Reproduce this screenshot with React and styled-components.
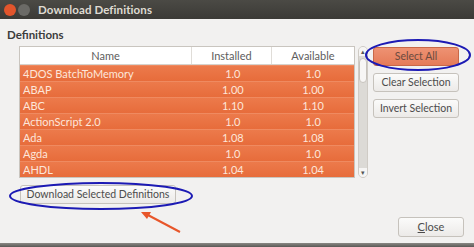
import React from "react";
import styled, { createGlobalStyle } from "styled-components";

const GlobalStyle = createGlobalStyle`
  html, body { margin: 0; padding: 0; background: #f2f1f0; }
  body { font-family: Lato, "Liberation Sans", sans-serif; }
`;

const rows = [
  ["4DOS BatchToMemory", "1.0", "1.0"],
  ["ABAP", "1.00", "1.00"],
  ["ABC", "1.10", "1.10"],
  ["ActionScript 2.0", "1.0", "1.0"],
  ["Ada", "1.08", "1.08"],
  ["Agda", "1.0", "1.0"],
  ["AHDL", "1.04", "1.04"],
];

const App = () => {
  return (
    <Window>
      <GlobalStyle />
      <TitleBar>
        <Dot color="#e2552c" />
        <Dot color="#6b6a66" />
        <Title>Download Definitions</Title>
      </TitleBar>

      <Body>
        <Label>Definitions</Label>
        <Main>
          <Table>
            <HeadRow>
              <HeadCell w={173}>Name</HeadCell>
              <HeadCell w={80}>Installed</HeadCell>
              <HeadCell w={83} last>Available</HeadCell>
            </HeadRow>
            {rows.map((r, i) => (
              <Row key={i}>
                <Cell w={173} left>{r[0]}</Cell>
                <Cell w={80}>{r[1]}</Cell>
                <Cell w={83}>{r[2]}</Cell>
              </Row>
            ))}
          </Table>

          <Scrollbar>
            <Arrow>▴</Arrow>
            <Thumb />
            <Trough />
            <Arrow>▾</Arrow>
          </Scrollbar>

          <Side>
            <Button active>Select All</Button>
            <Button>Clear Selection</Button>
            <Button>Invert Selection</Button>
          </Side>
        </Main>

        <DownloadButton>Download Selected Definitions</DownloadButton>

        <Footer>
          <CloseButton><u>C</u>lose</CloseButton>
        </Footer>
      </Body>
      <BottomEdge />

      {/* hand drawn marks over the screenshot */}
      <Marks width="474" height="247" viewBox="0 0 474 247">
        <ellipse cx="418" cy="55" rx="52" ry="15" fill="none" stroke="#1c1ab4" strokeWidth="2" />
        <ellipse cx="101" cy="196" rx="91" ry="13" fill="none" stroke="#1c1ab4" strokeWidth="2" />
        <line x1="180" y1="232" x2="146" y2="214" stroke="#e8562a" strokeWidth="2" />
        <polygon points="141,212 151,212 147,219" fill="#e8562a" />
      </Marks>
    </Window>
  );
};

const Window = styled.div`
  position: relative;
  width: 474px;
  height: 247px;
  display: flex;
  flex-direction: column;
  overflow: hidden;
  background: #f2f1f0;
`;

const TitleBar = styled.div`
  height: 19px;
  display: flex;
  align-items: center;
  padding-left: 4px;
  gap: 1px;
  background: linear-gradient(#4b4a45, #3b3a36);
`;

const Dot = styled.span`
  width: 12px;
  height: 12px;
  border-radius: 50%;
  background: ${props => props.color};
  margin-right: 1px;
`;

const Title = styled.span`
  margin-left: 6px;
  color: #dfdbd2;
  font-weight: bold;
  font-size: 11.5px;
  letter-spacing: 0.1px;
`;

const Body = styled.div`
  flex: 1;
  display: flex;
  flex-direction: column;
  padding: 8px 10px 0 7px;
`;

const Label = styled.div`
  font-weight: bold;
  font-size: 11.5px;
  color: #3c3c3c;
  height: 15px;
  line-height: 15px;
`;

const Main = styled.div`
  display: flex;
  align-items: flex-start;
  margin-top: 4px;
  padding-left: 12px;
`;

const Table = styled.div`
  width: 336px;
  border: 1px solid #c9c5bf;
  background: #fff;
  box-sizing: border-box;
`;

const HeadRow = styled.div`
  display: flex;
  height: 17px;
  border-bottom: 1px solid #d6d2cc;
`;

const HeadCell = styled.div`
  width: ${props => props.w}px;
  text-align: center;
  font-size: 11px;
  line-height: 17px;
  color: #5d5d5d;
  border-right: ${props => props.last ? "none" : "1px solid #e0ddd8"};
`;

const Row = styled.div`
  display: flex;
  height: 16px;
  background: linear-gradient(#ec7a4b, #e76c3b);
  border-top: 1px solid #ef8a60;
  box-sizing: border-box;
`;

const Cell = styled.div`
  width: ${props => props.w}px;
  font-size: 11px;
  line-height: 15px;
  color: #fde6da;
  text-align: ${props => props.left ? "left" : "center"};
  padding-left: ${props => props.left ? "3px" : "0"};
`;

const Scrollbar = styled.div`
  width: 10px;
  height: 132px;
  margin-left: 3px;
  border: 1px solid #cfcbc5;
  border-radius: 5px;
  background: #dcdad6;
  box-sizing: border-box;
  display: flex;
  flex-direction: column;
  overflow: hidden;
`;

const Arrow = styled.div`
  height: 9px;
  background: #f6f5f4;
  font-size: 7px;
  line-height: 9px;
  text-align: center;
  color: #555;
`;

const Thumb = styled.div`
  height: 25px;
  margin-top: 2px;
  background: #f7f6f5;
  border: 1px solid #c6c2bc;
  border-radius: 4px;
  box-sizing: border-box;
`;

const Trough = styled.div`
  flex: 1;
`;

const Side = styled.div`
  display: flex;
  flex-direction: column;
  gap: 7px;
  margin-left: 5px;
  margin-top: 1px;
`;

const Button = styled.div`
  width: 86px;
  height: 19px;
  box-sizing: border-box;
  border: 1px solid ${props => props.active ? "#c86848" : "#c6c2bc"};
  border-radius: 3px;
  background: ${props => props.active ? "linear-gradient(#ee9273, #e57b58)" : "linear-gradient(#fbfbfa, #eceae8)"};
  font-size: 10.5px;
  line-height: 17px;
  text-align: center;
  white-space: nowrap;
  color: ${props => props.active ? "#6a4a40" : "#4c4c4c"};
`;

const DownloadButton = styled(Button)`
  width: 156px;
  margin: 7px 0 0 13px;
`;

const Footer = styled.div`
  display: flex;
  justify-content: flex-end;
  margin-top: 13px;
`;

const CloseButton = styled(Button)`
  width: 66px;
  height: 20px;
  line-height: 18px;
  font-size: 11px;
`;

const BottomEdge = styled.div`
  height: 4px;
  background: linear-gradient(#8a8884, #5a5955);
`;

const Marks = styled.svg`
  position: absolute;
  left: 0;
  top: 0;
  pointer-events: none;
`;

export default App;
